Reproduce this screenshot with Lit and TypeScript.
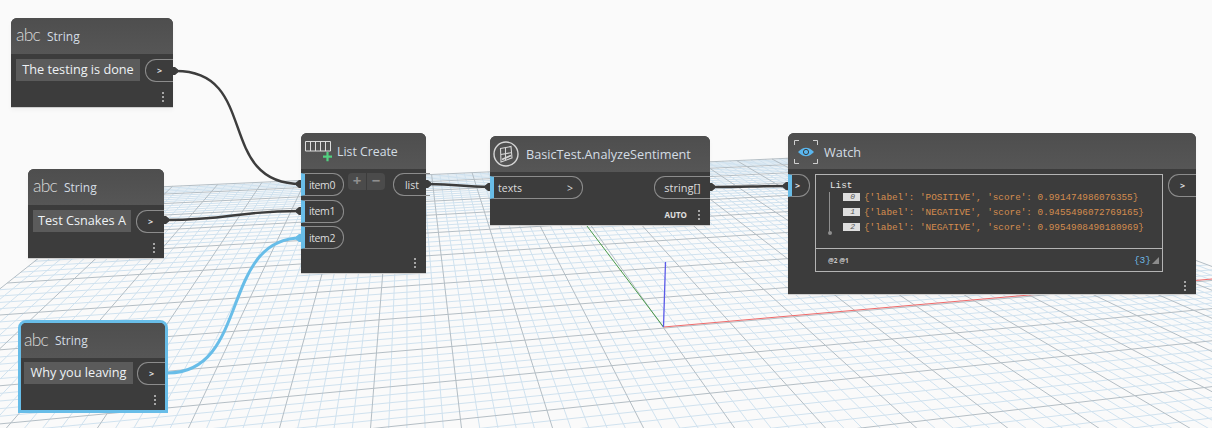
import { LitElement, html, css, svg } from "lit";
import { customElement } from "lit/decorators.js";

const VBX = 407, VBY = -34, VAX = 4636, VAY = -17;
const FAR = 177;
const MAJOR_A = [177, 184, 193, 204, 218, 236, 259, 288, 320, 353, 388, 428, 485, 550, 630];
const yCross = (y0: number, s: number) => {
  const a = (y0 - VAY) / (VAX - 377);
  return (VAY + a * (VAX - VBX + s * VBY)) / (1 + a * s);
};
const xOn = (s: number, y: number) => VBX + s * (y - VBY);
const S0 = 0.709, DS = 0.197;
const sOf = (k: number) => S0 + k * DS;
const fmt = (n: number) => n.toFixed(1);

function gridPaths() {
  let minor = "", major = "";
  for (let i = -50; i <= 50; i++) {
    const s = sOf(i / 5);
    const y1 = yCross(FAR, s);
    const d = `M${fmt(xOn(s, y1))} ${fmt(y1)}L${fmt(xOn(s, 440))} 440`;
    if (i % 5 === 0) major += d; else minor += d;
  }
  const sl = sOf(-10), sr = sOf(10);
  for (let i = 0; i < MAJOR_A.length - 1; i++) {
    for (let j = 0; j < 5; j++) {
      const y0 = MAJOR_A[i] + ((MAJOR_A[i + 1] - MAJOR_A[i]) * j) / 5;
      const ya = yCross(y0, sl), yb = yCross(y0, sr);
      const d = `M${fmt(xOn(sl, ya))} ${fmt(ya)}L${fmt(xOn(sr, yb))} ${fmt(yb)}`;
      if (j === 0) major += d; else minor += d;
    }
  }
  return { minor, major };
}

const dots = html`<span class="dots"><i></i><i></i><i></i></span>`;
const place = (x: number, y: number, w: number, h: number) =>
  `left:${x}px;top:${y}px;width:${w}px;height:${h}px`;

@customElement("app-root")
export class AppRoot extends LitElement {
  static styles = css`
    :host { display: block; width: 1212px; height: 428px; }
    .canvas { position: relative; width: 1212px; height: 428px; overflow: hidden; background: #fafafa;
      font-family: "Open Sans", "Noto Sans", sans-serif; }
    .layer { position: absolute; left: 0; top: 0; }
    .minor { stroke: #d0e2ef; stroke-width: 1; fill: none; }
    .major { stroke: #b4bec5; stroke-width: 1; fill: none; }
    .wire { stroke: #3d3d3d; stroke-width: 2.4; fill: none; }
    .wire.sel { stroke: #68bde8; stroke-width: 3; }
    .node { position: absolute; box-sizing: border-box; display: flex; flex-direction: column;
      background: #3c3c3c; border-radius: 6px 6px 0 0; box-shadow: 0 1px 0 #cfcfcf, 0 3px 5px rgba(0,0,0,.04); color: #e4e4e4; }
    .node.selected { border: 3px solid #68bde8; border-radius: 8px 8px 0 0; box-shadow: none; }
    .head { flex: none; height: 36px; display: flex; align-items: center; gap: 6px; padding-left: 5px;
      background: linear-gradient(#4e4e4e, #565656); border-radius: 6px 6px 0 0; box-sizing: border-box;
      font-size: 12px; color: #d4dde4; }
    .selected .head { height: 35px; padding-left: 3px; border-radius: 5px 5px 0 0; }
    .abc { font-family: Lato, "Open Sans", sans-serif; font-weight: 300; font-size: 17.5px; line-height: 1.2; color: #d8d8d8; width: 25px; flex: none; letter-spacing: -0.8px; margin-top: -3px; white-space: nowrap; }
    .title { font-size: 12.7px; }
    .body { flex: 1; display: flex; flex-direction: column; min-height: 0; }
    .row { display: flex; align-items: flex-start; padding-top: 5px; }
    .strrow { gap: 5px; padding-left: 5px; padding-top: 5px; }
    .selected .strrow { padding-left: 3px; padding-top: 4px; gap: 4px; }
    .input { flex: 1; min-width: 0; height: 22px; line-height: 21px; background: #5b5b5b; text-align: center;
      font-size: 12.7px; color: #eef2f5; white-space: nowrap; }
    .out { box-sizing: border-box; height: 23px; border: 1px solid #8c8c8c; border-right: none;
      border-radius: 11px 0 0 11px; display: flex; align-items: center; justify-content: center;
      font-size: 10.5px; color: #dcdcdc; flex: none; }
    .run { width: 28px; font-size: 9px; font-weight: 700; }
    .foot { margin-top: auto; display: flex; justify-content: flex-end; align-items: center; gap: 11px;
      padding: 0 8px 5px 0; }
    .dots { display: flex; flex-direction: column; gap: 2px; width: 3px; }
    .dots i { display: block; width: 2px; height: 2px; background: #a6a6a6; }
    .auto { font-size: 8px; font-weight: 700; color: #e0e0e0; }
    .ports { display: flex; flex-direction: column; gap: 3.5px; padding-top: 4px; flex: 1; }
    .lrow { display: flex; gap: 4px; }
    .in { box-sizing: border-box; height: 23px; border: 1px solid #8c8c8c; border-left: 4px solid #68bde8;
      border-radius: 0 11px 11px 0; display: flex; align-items: center; padding-left: 4px; padding-right: 9px;
      font-size: 10.5px; color: #dcdcdc; justify-content: space-between; flex: none; }
    .in.port { width: 43px; padding-right: 0; letter-spacing: -0.4px; }
    .in.texts { width: 93px; }
    .in.run2 { width: 22px; padding-left: 3px; padding-right: 0; font-size: 9px; font-weight: 700; }
    .pm { display: flex; gap: 1px; height: 17px; flex: none; }
    .pm span { width: 18px; height: 17px; background: #4b4b4b; color: #8f8f8f; font-size: 15px; line-height: 15px;
      text-align: center; font-weight: 700; }
    .pm span:first-child { border-radius: 4px 0 0 4px; }
    .pm span:last-child { border-radius: 0 4px 4px 0; }
    .spacer { flex: 1; }
    .box { box-sizing: border-box; width: 349px; height: 98px; margin-left: 5px; margin-right: 5px; border: 1px solid #b4b4b4;
      display: flex; flex-direction: column; font-family: "Liberation Mono", monospace; font-size: 9.33px; }
    .tree { flex: 1; position: relative; padding: 6px 0 0 14px; }
    .listname { height: 10px; line-height: 10px; color: #e4e4e4; font-size: 9.33px; }
    .items { display: flex; flex-direction: column; gap: 5px; padding: 1px 0 0 13px; }
    .entry { display: flex; align-items: center; gap: 4px; height: 10px; color: #d58d4f; white-space: nowrap; }
    .idx { width: 17px; height: 8px; line-height: 8px; background: #dedede; color: #555; font-style: italic; text-align: right;
      padding-right: 5px; box-sizing: border-box; font-size: 8px; }
    .line { position: absolute; left: 13px; top: 17px; width: 1px; height: 40px; background: #8f8f8f; }
    .knob { position: absolute; left: 12px; top: 56px; width: 4px; height: 4px; border-radius: 50%; background: #8f8f8f; }
    .boxfoot { flex: none; height: 22px; border-top: 1px solid #b4b4b4; display: flex; align-items: center;
      padding: 0 3px 0 12px; color: #c8c8c8; font-size: 6.5px; font-family: "Open Sans", sans-serif; font-weight: 700; }
    .count { color: #6fb9e6; font-size: 9.5px; font-family: "Liberation Mono", monospace; margin-right: 1px; font-weight: 400; }
    .tri { width: 0; height: 0; border-left: 7px solid transparent; border-bottom: 7px solid #8c8c8c; }
  `;

  private grid = gridPaths();

  private stringNode(x: number, y: number, w: number, h: number, text: string, selected = false) {
    return html`<div class="node ${selected ? "selected" : ""}" style=${place(x, y, w, h)}>
      <div class="head"><span class="abc">abc</span><span>String</span></div>
      <div class="body">
        <div class="row strrow"><div class="input">${text}</div><div class="out run">&gt;</div></div>
        <div class="foot">${dots}</div>
      </div>
    </div>`;
  }

  render() {
    return html`<div class="canvas">
      <svg class="layer" width="1212" height="428" viewBox="0 0 1212 428">
        <path class="minor" d=${this.grid.minor}></path>
        <path class="major" d=${this.grid.major}></path>
        <path d="M663.5 327L1212 279" stroke="#f06a6a" stroke-width="1" fill="none"></path>
        <path d="M663.5 327L587 226" stroke="#4a9a4a" stroke-width="1" fill="none"></path>
        <path d="M663.5 327L665.5 262" stroke="#5a5ae8" stroke-width="1.3" fill="none"></path>
        ${svg`
          <path class="wire" d="M176 71C260 71 215 184 301 184"></path>
          <path class="wire" d="M166 220C233 220 233 211 301 211"></path>
          <path class="wire sel" d="M168 373C250 373 220 238 301 238"></path>
          <path class="wire" d="M428 184C460 184 460 187 490 187"></path>
          <path class="wire" d="M712 187C750 187 750 186 788 186"></path>
          <path d="M173 67h2l3 2.5v3l-3 2.5h-2z M164 216h2l3 2.5v3l-3 2.5h-2z M426 180h2l3 2.5v3l-3 2.5h-2z M710 183h2l3 2.5v3l-3 2.5h-2z" fill="#3d3d3d"></path>
          <path d="M301 180h-2l-3 2.5v3l3 2.5h2z M301 207h-2l-3 2.5v3l3 2.5h2z M490 183h-2l-3 2.5v3l3 2.5h2z M788 182h-2l-3 2.5v3l3 2.5h2z" fill="#3d3d3d"></path>
          <path d="M301 234h-2l-3 2.5v3l3 2.5h2z" fill="#68bde8"></path>
        `}
      </svg>

      ${this.stringNode(11, 18, 162, 89, "The testing is done")}
      ${this.stringNode(28, 169, 136, 89, "Test Csnakes A")}
      ${this.stringNode(18, 320, 150, 93, "Why you leaving", true)}

      <div class="node" style=${place(301, 133, 125, 140)}>
        <div class="head" style="padding-left:4px;gap:4px">
          <svg width="28" height="30" viewBox="0 0 28 30">
            <path d="M.5 5.5h25v9.5H.5z M5.5 5.5v9.5 M10.5 5.5v9.5 M15.5 5.5v9.5 M20.5 5.5v9.5" fill="none" stroke="#dcdcdc" stroke-width="1"></path>
            <path d="M18 19.5h3.4V16h2.2v3.5H27v2.2h-3.4v3.5h-2.2v-3.5H18z" fill="#52d080"></path>
          </svg>
          <span class="title" style="font-size:12.3px">List Create</span>
        </div>
        <div class="body">
          <div class="ports">
            <div class="lrow">
              <div class="in port">item0</div>
              <div class="pm"><span>+</span><span>−</span></div>
              <div class="spacer"></div>
              <div class="out" style="width:37px">list</div>
            </div>
            <div class="lrow"><div class="in port">item1</div></div>
            <div class="lrow"><div class="in port">item2</div></div>
          </div>
          <div class="foot" style="padding-right:9px;padding-bottom:5px">${dots}</div>
        </div>
      </div>

      <div class="node" style=${place(490, 136, 220, 89)}>
        <div class="head" style="padding-left:3px;gap:7px">
          <svg width="26" height="26" viewBox="0 0 26 26">
            <circle cx="13" cy="13" r="12" fill="none" stroke="#d6d6d6" stroke-width="1.4"></circle>
            <path d="M7.5 7.5L18 5.5L19 17L8 21Z M12.5 7v12.5 M8 13.5l11-2" fill="none" stroke="#d6d6d6" stroke-width="1.1"></path>
            <path d="M9 18.5l9-4" fill="none" stroke="#d6d6d6" stroke-width="1.8"></path>
          </svg>
          <span class="title">BasicTest.AnalyzeSentiment</span>
        </div>
        <div class="body">
          <div class="lrow" style="padding-top:4px;justify-content:space-between">
            <div class="in texts"><span>texts</span><span>&gt;</span></div>
            <div class="out" style="width:56px;font-size:11px">string[]</div>
          </div>
          <div class="foot" style="padding-right:9px"><span class="auto">AUTO</span>${dots}</div>
        </div>
      </div>

      <div class="node" style=${place(788, 133, 408, 161)}>
        <div class="head" style="padding-left:6px;gap:6px;padding-top:2px">
          <svg width="24" height="24" viewBox="0 0 24 24">
            <path d="M.5 5V.5H5 M19 .5h4.5V5 M.5 19v4.5H5 M19 23.5h4.5V19" fill="none" stroke="#cfcfcf" stroke-width="1"></path>
            <path d="M4 12Q12 3.5 20 12Q12 20.5 4 12Z" fill="#5ab6ee"></path>
            <circle cx="12" cy="12" r="2.6" fill="none" stroke="#3c3c3c" stroke-width="1"></circle>
          </svg>
          <span class="title">Watch</span>
        </div>
        <div class="body">
          <div class="row">
            <div class="in run2">&gt;</div>
            <div class="box">
              <div class="tree">
                <div class="listname">List</div>
                <div class="line"></div><div class="knob"></div>
                <div class="items">
                  <div class="entry"><span class="idx">0</span><span>{'label': 'POSITIVE', 'score': 0.991474986076355}</span></div>
                  <div class="entry"><span class="idx">1</span><span>{'label': 'NEGATIVE', 'score': 0.9455496072769165}</span></div>
                  <div class="entry"><span class="idx">2</span><span>{'label': 'NEGATIVE', 'score': 0.9954908490180969}</span></div>
                </div>
              </div>
              <div class="boxfoot"><span>@2 @1</span><span class="spacer"></span><span class="count">{3}</span><span class="tri"></span></div>
            </div>
            <div class="out run">&gt;</div>
          </div>
          <div class="foot" style="padding-right:9px;padding-bottom:3px">${dots}</div>
        </div>
      </div>
    </div>`;
  }
}
